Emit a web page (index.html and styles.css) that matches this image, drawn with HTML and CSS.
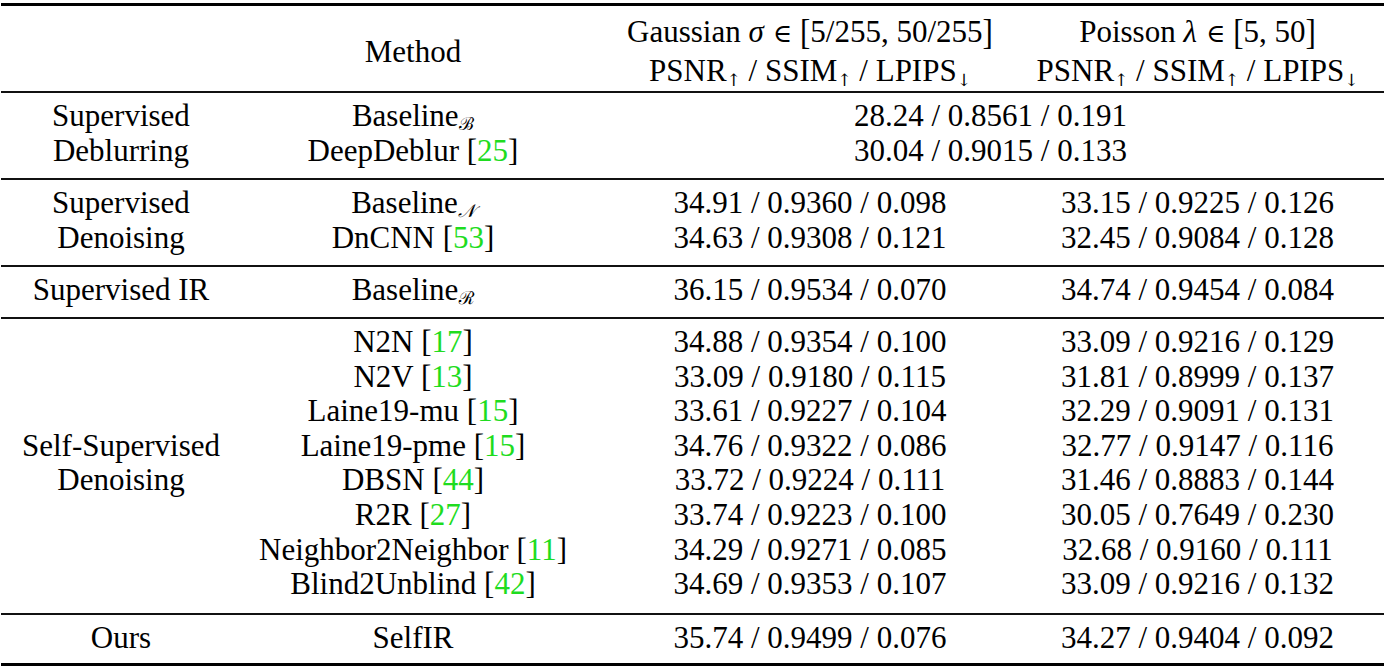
FILE: index.html
```html
<!DOCTYPE html>
<html>
<head>
<meta charset="utf-8">
<link rel="stylesheet" href="styles.css">
</head>
<body>
<div class="table">
  <div class="sec head">
    <div class="grp r2"></div>
    <div class="method r2 mid">Method</div>
    <div class="val"><div>Gaussian <i>σ</i><span class="rel">∈</span><span class="br">[</span>5/255, 50/255<span class="br">]</span></div><div>PSNR<span class="ar">&#x2191;&#xFE0E;</span> / SSIM<span class="ar">&#x2191;&#xFE0E;</span> / LPIPS<span class="ar">&#x2193;&#xFE0E;</span></div></div>
    <div class="val last"><div>Poisson <i>λ</i><span class="rel">∈</span><span class="br">[</span>5, 50<span class="br">]</span></div><div>PSNR<span class="ar">&#x2191;&#xFE0E;</span> / SSIM<span class="ar">&#x2191;&#xFE0E;</span> / LPIPS<span class="ar">&#x2193;&#xFE0E;</span></div></div>
  </div>

  <div class="sec">
    <div class="grp r2">Supervised<br>Deblurring</div>
    <div class="method">Baseline<sub class="cal">ℬ</sub></div>
    <div class="val span">28.24 / 0.8561 / 0.191</div>
    <div class="method">DeepDeblur [<span class="cite">25</span>]</div>
    <div class="val span">30.04 / 0.9015 / 0.133</div>
  </div>

  <div class="sec">
    <div class="grp r2">Supervised<br>Denoising</div>
    <div class="method">Baseline<sub class="cal">𝒩</sub></div>
    <div class="val">34.91 / 0.9360 / 0.098</div>
    <div class="val last">33.15 / 0.9225 / 0.126</div>
    <div class="method">DnCNN [<span class="cite">53</span>]</div>
    <div class="val">34.63 / 0.9308 / 0.121</div>
    <div class="val last">32.45 / 0.9084 / 0.128</div>
  </div>

  <div class="sec ir">
    <div class="grp">Supervised IR</div>
    <div class="method">Baseline<sub class="cal">ℛ</sub></div>
    <div class="val">36.15 / 0.9534 / 0.070</div>
    <div class="val last">34.74 / 0.9454 / 0.084</div>
  </div>

  <div class="sec self">
    <div class="grp r8">Self-Supervised<br>Denoising</div>
    <div class="method">N2N [<span class="cite">17</span>]</div>
    <div class="val">34.88 / 0.9354 / 0.100</div>
    <div class="val last">33.09 / 0.9216 / 0.129</div>
    <div class="method">N2V [<span class="cite">13</span>]</div>
    <div class="val">33.09 / 0.9180 / 0.115</div>
    <div class="val last">31.81 / 0.8999 / 0.137</div>
    <div class="method">Laine19-mu [<span class="cite">15</span>]</div>
    <div class="val">33.61 / 0.9227 / 0.104</div>
    <div class="val last">32.29 / 0.9091 / 0.131</div>
    <div class="method">Laine19-pme [<span class="cite">15</span>]</div>
    <div class="val">34.76 / 0.9322 / 0.086</div>
    <div class="val last">32.77 / 0.9147 / 0.116</div>
    <div class="method">DBSN [<span class="cite">44</span>]</div>
    <div class="val">33.72 / 0.9224 / 0.111</div>
    <div class="val last">31.46 / 0.8883 / 0.144</div>
    <div class="method">R2R [<span class="cite">27</span>]</div>
    <div class="val">33.74 / 0.9223 / 0.100</div>
    <div class="val last">30.05 / 0.7649 / 0.230</div>
    <div class="method">Neighbor2Neighbor [<span class="cite">11</span>]</div>
    <div class="val">34.29 / 0.9271 / 0.085</div>
    <div class="val last">32.68 / 0.9160 / 0.111</div>
    <div class="method">Blind2Unblind [<span class="cite">42</span>]</div>
    <div class="val">34.69 / 0.9353 / 0.107</div>
    <div class="val last">33.09 / 0.9216 / 0.132</div>
  </div>

  <div class="sec end">
    <div class="grp">Ours</div>
    <div class="method">SelfIR</div>
    <div class="val">35.74 / 0.9499 / 0.076</div>
    <div class="val last">34.27 / 0.9404 / 0.092</div>
  </div>
</div>
</body>
</html>
```

FILE: styles.css
```css
html, body {
  margin: 0;
  padding: 0;
  background: #fff;
}

body {
  font-family: "Liberation Serif", "Times New Roman", "DejaVu Serif", serif;
  font-size: 31px;
  color: #000;
}

.table {
  width: 1383px;
  margin: 3px 0 0 1px;
  border-top: 3px solid #000;
  border-bottom: 3px solid #000;
}

.sec {
  display: grid;
  grid-template-columns: 240px 344px 450px 349px;
  padding: 6px 0 10px;
  line-height: 34.6px;
  border-bottom: 2px solid #111;
  text-align: center;
  white-space: nowrap;
}

.sec.ir {
  padding-bottom: 9px;
}

.sec.self {
  padding-bottom: 11px;
}

.sec.end {
  border-bottom: none;
  padding-bottom: 8px;
}

.sec.head {
  padding: 6px 0 1px;
  line-height: 39px;
}

.grp {
  display: flex;
  flex-direction: column;
  justify-content: center;
  align-items: center;
}

.r2 { grid-row: span 2; }
.r8 { grid-row: span 8; }

.mid {
  display: flex;
  align-items: center;
  justify-content: center;
}

.method {
  grid-column: 2;
}

.val.last {
  padding-right: 24px;
}

.val.span {
  grid-column: 3 / 5;
  padding-left: 12px;
}

.cite {
  color: #1fdc1f;
}

.cal {
  font-family: "DejaVu Serif", "Noto Sans", serif;
  font-style: italic;
  font-size: 18px;
  line-height: 0;
  vertical-align: -4px;
}

.ar {
  font-family: "DejaVu Serif", "Liberation Serif", serif;
  font-size: 17px;
  line-height: 0;
  vertical-align: -5px;
  color: #000;
}

.rel {
  font-family: "DejaVu Serif", serif;
  font-size: 26px;
  line-height: 0;
  margin: 0 8px 0 9px;
}

.br {
  display: inline-block;
  line-height: 0;
  transform: scaleY(1.15);
}

i {
  font-style: italic;
}
```
